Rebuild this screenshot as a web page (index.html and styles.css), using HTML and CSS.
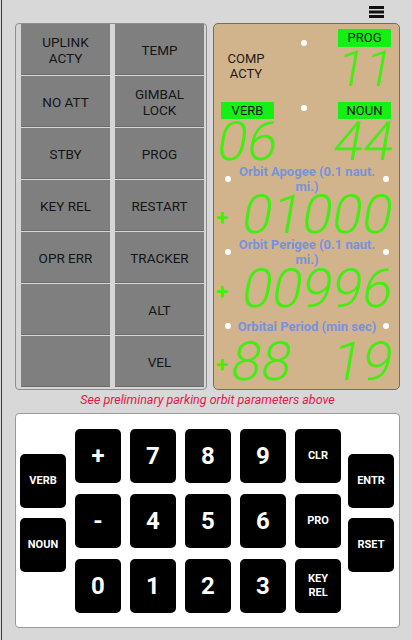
FILE: index.html
```html
<!DOCTYPE html>
<html>
<head>
<meta charset="utf-8">
<title>DSKY</title>
<link rel="stylesheet" href="styles.css">
</head>
<body>
<div class="screen">
  <header class="topbar">
    <svg class="menu" width="15" height="12" viewBox="0 0 15 12" aria-label="menu">
      <rect x="0" y="0" width="15" height="3" fill="#111"/>
      <rect x="0" y="4.5" width="15" height="3" fill="#111"/>
      <rect x="0" y="9" width="15" height="3" fill="#111"/>
    </svg>
  </header>

  <main class="console">
    <section class="lamps">
      <div class="lamp-btn">UPLINK<br>ACTY</div>
      <div class="lamp-btn">TEMP</div>
      <div class="lamp-btn">NO ATT</div>
      <div class="lamp-btn">GIMBAL<br>LOCK</div>
      <div class="lamp-btn">STBY</div>
      <div class="lamp-btn">PROG</div>
      <div class="lamp-btn">KEY REL</div>
      <div class="lamp-btn">RESTART</div>
      <div class="lamp-btn">OPR ERR</div>
      <div class="lamp-btn">TRACKER</div>
      <div class="lamp-btn"></div>
      <div class="lamp-btn">ALT</div>
      <div class="lamp-btn"></div>
      <div class="lamp-btn">VEL</div>
    </section>

    <section class="dsky">
      <div class="dsky-head">
        <div class="comp">COMP<br>ACTY</div>
        <span class="dot head-dot"></span>
        <div class="prog-col">
          <div class="tag">PROG</div>
          <div class="seg seg-prog">11</div>
        </div>
      </div>
      <div class="dsky-tags">
        <div class="tag">VERB</div>
        <span class="dot tag-dot"></span>
        <div class="tag">NOUN</div>
      </div>
      <div class="vn-row">
        <span class="seg">06</span>
        <span class="seg">44</span>
      </div>
      <div class="lbl-row two">
        <span class="dot"></span>
        <p class="lbl">Orbit Apogee (0.1 naut. mi.)</p>
        <span class="dot"></span>
      </div>
      <div class="reg r1">
        <span class="sign">+</span>
        <span class="seg">01000</span>
      </div>
      <div class="lbl-row two">
        <span class="dot"></span>
        <p class="lbl">Orbit Perigee (0.1 naut. mi.)</p>
        <span class="dot"></span>
      </div>
      <div class="reg r2">
        <span class="sign">+</span>
        <span class="seg">00996</span>
      </div>
      <div class="lbl-row one">
        <span class="dot"></span>
        <p class="lbl">Orbital Period (min sec)</p>
        <span class="dot"></span>
      </div>
      <div class="reg r3">
        <span class="grp"><span class="sign">+</span><span class="seg">88</span></span>
        <span class="seg">19</span>
      </div>
    </section>
  </main>

  <p class="note">See preliminary parking orbit parameters above</p>

  <section class="keypad">
    <div class="side left">
      <div class="key word">VERB</div>
      <div class="key word">NOUN</div>
    </div>
    <div class="keys">
      <div class="key">+</div>
      <div class="key">7</div>
      <div class="key">8</div>
      <div class="key">9</div>
      <div class="key word">CLR</div>
      <div class="key">-</div>
      <div class="key">4</div>
      <div class="key">5</div>
      <div class="key">6</div>
      <div class="key word">PRO</div>
      <div class="key">0</div>
      <div class="key">1</div>
      <div class="key">2</div>
      <div class="key">3</div>
      <div class="key word">KEY<br>REL</div>
    </div>
    <div class="side right">
      <div class="key word">ENTR</div>
      <div class="key word">RSET</div>
    </div>
  </section>
</div>
</body>
</html>
```

FILE: styles.css
```css
* { box-sizing: border-box; }

html, body {
  margin: 0;
  padding: 0;
}

body {
  width: 412px;
  height: 640px;
  overflow: hidden;
  background: #d8d8d8;
  font-family: Roboto, "Noto Sans", "Liberation Sans", sans-serif;
}

.screen {
  margin-left: 1px;
  border-left: 1px solid #3a3a3a;
  height: 640px;
  padding: 0 12px 0 13px;
}

/* top bar with menu icon */
.topbar {
  height: 23px;
  display: flex;
  justify-content: flex-end;
  align-items: flex-start;
  padding: 6px 16px 0 0;
}

.menu { display: block; }

/* main console area */
.console {
  display: flex;
  gap: 6px;
  height: 367px;
}

.lamps {
  width: 192px;
  border: 1px solid #8e8e8e;
  border-radius: 4px;
  background: #d6d6d6;
  display: grid;
  grid-template-columns: 89px 89px;
  grid-auto-rows: 51px;
  column-gap: 5px;
  row-gap: 1px;
  padding: 0 2px 2px 5px;
}

.lamp-btn {
  background: #7f7f7f;
  box-shadow: inset 0 -1px 0 #6c6c6c;
  display: flex;
  align-items: center;
  justify-content: center;
  text-align: center;
  font-size: 13.5px;
  line-height: 16px;
  color: #151515;
}

/* DSKY display */
.dsky {
  width: 187px;
  border: 1px solid #6e6e6e;
  border-radius: 5px;
  background: #d2b48c;
  display: flex;
  flex-direction: column;
}

.dsky-head,
.dsky-tags {
  display: grid;
  grid-template-columns: 53px 1fr 53px;
  padding: 0 8px 0 7px;
}

.dsky-head { height: 76px; }
.dsky-tags { height: 21px; padding-top: 2px; }

.comp {
  align-self: center;
  padding-top: 7px;
  text-align: center;
  font-size: 13px;
  line-height: 15px;
  color: #1a1a1a;
  margin-left: -3px;
}

.dot {
  display: block;
  width: 6px;
  height: 6px;
  border-radius: 50%;
  background: #ffffff;
  flex: none;
}

.head-dot {
  justify-self: center;
  margin-top: 16px;
  margin-right: 4px;
}

.tag-dot {
  justify-self: center;
  margin-top: 3px;
  margin-right: 4px;
}

.prog-col {
  padding-top: 5px;
  display: flex;
  flex-direction: column;
}

.tag {
  background: #14f014;
  color: #111;
  font-size: 13px;
  height: 18px;
  line-height: 18px;
  text-align: center;
}

.dsky-tags .tag {
  height: 17px;
  line-height: 17px;
}

.seg {
  display: inline-block;
  font-family: Roboto, "DejaVu Sans", sans-serif;
  font-weight: 300;
  font-size: 54px;
  color: #42ee12;
  transform: skewX(-10deg);
  white-space: nowrap;
}

.seg-prog {
  font-size: 50px;
  height: 44px;
  line-height: 44px;
  text-align: right;
  margin-right: -2px;
}

.vn-row {
  height: 42px;
  line-height: 42px;
  display: flex;
  justify-content: space-between;
  padding: 0 5px 0 4px;
}

.lbl-row {
  display: flex;
  align-items: center;
  padding: 0 10px 0 11px;
}

.lbl-row.two { height: 31px; }
.lbl-row.one { height: 30px; }

.lbl {
  flex: 1;
  margin: 0;
  text-align: center;
  color: #7692dc;
  font-weight: 700;
  font-size: 13px;
  line-height: 15px;
}

.reg {
  display: flex;
  align-items: center;
  justify-content: space-between;
  padding: 0 6px 0 2px;
}

.reg .seg { line-height: 42px; }

.r1 { height: 42px; }
.r2 { height: 44px; }
.r3 { height: 42px; }

.grp {
  display: flex;
  align-items: center;
}

.sign {
  width: 14px;
  font-size: 22px;
  font-weight: 700;
  line-height: 22px;
  color: #42ee12;
  margin-top: 6px;
  margin-right: 2px;
}

/* caption */
.note {
  margin: 0;
  height: 23px;
  padding-top: 1px;
  line-height: 18px;
  text-align: center;
  color: #e8174b;
  font-style: italic;
  font-size: 12.5px;
}

/* keypad */
.keypad {
  width: 385px;
  height: 215px;
  background: #ffffff;
  border: 1px solid #9a9a9a;
  border-radius: 4px;
  display: flex;
  align-items: flex-start;
  padding: 15px 5px 0 4px;
}

.side {
  width: 46px;
  display: flex;
  flex-direction: column;
  gap: 10px;
  margin-top: 25px;
}

.side.left { margin-right: 9px; }
.side.right { margin-left: 7px; }

.keys {
  display: grid;
  grid-template-columns: repeat(5, 46px);
  grid-auto-rows: 54px;
  column-gap: 9px;
  row-gap: 11px;
}

.key {
  height: 54px;
  background: #000;
  border-radius: 5px;
  color: #fff;
  display: flex;
  align-items: center;
  justify-content: center;
  text-align: center;
  font-weight: 700;
  font-size: 24px;
}

.key.word {
  font-size: 11px;
  line-height: 14px;
}
```
